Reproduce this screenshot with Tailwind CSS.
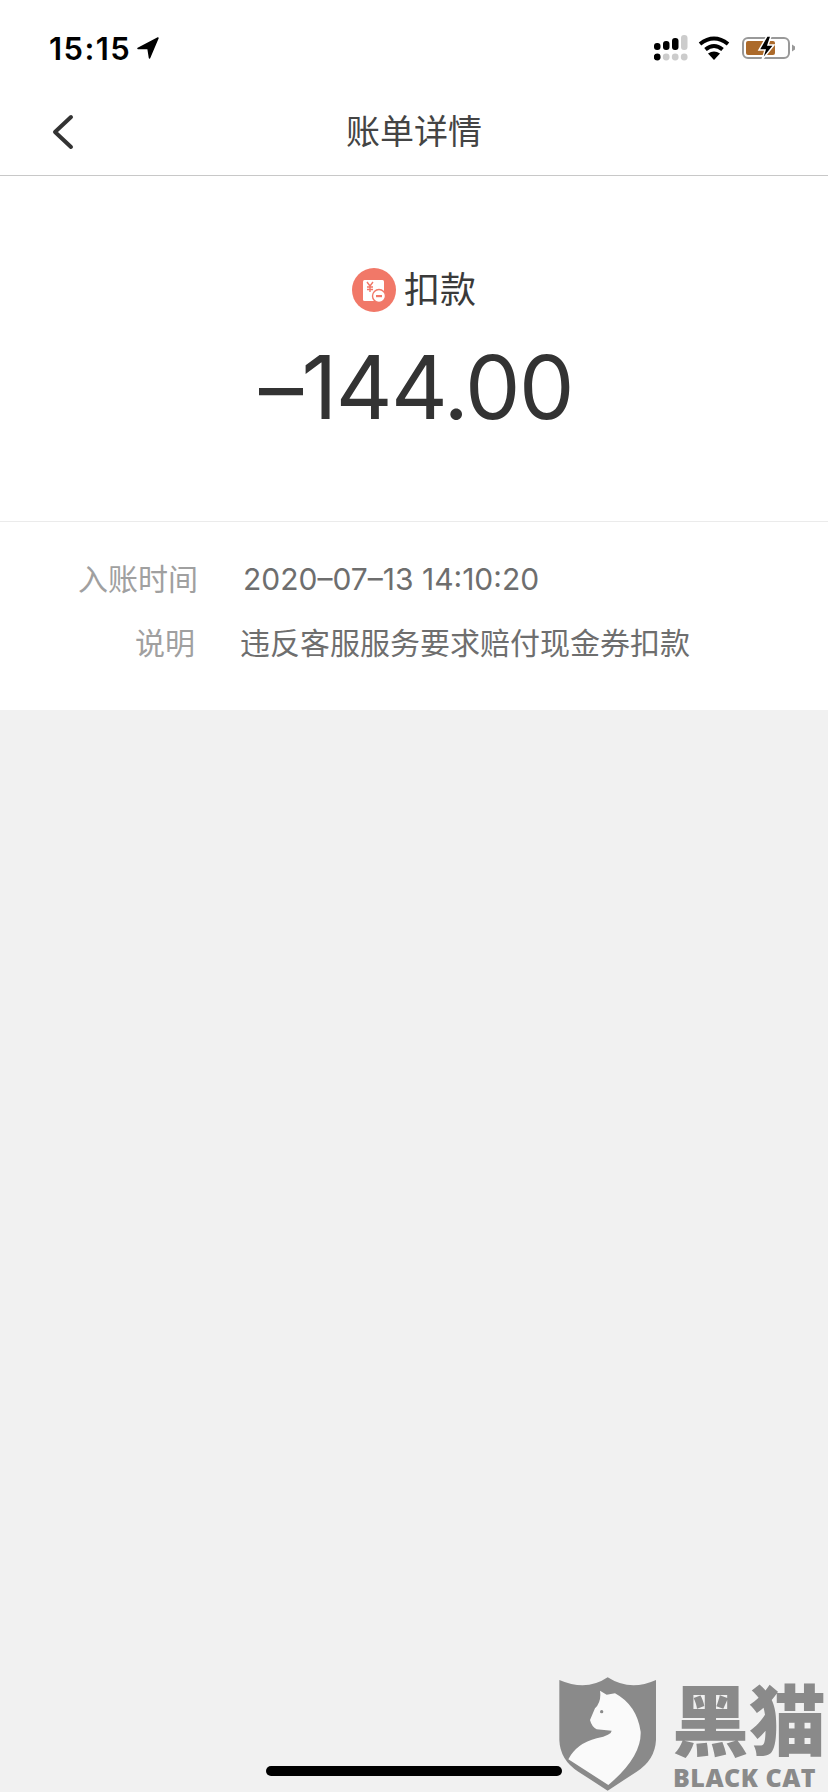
<!DOCTYPE html>
<html lang="zh">
<head>
    <meta charset="UTF-8">
    <meta name="viewport" content="width=device-width, initial-scale=1.0">
    <title>账单详情</title>
    <script src="https://cdn.jsdelivr.net/npm/@tailwindcss/browser@4"></script>
</head>
<body class="relative flex h-[1792px] w-[828px] flex-col overflow-hidden bg-[#f1f1f1] font-['Inter','Noto_Sans_CJK_SC',sans-serif]">

    <!-- Status bar -->
    <div class="flex h-[88px] items-center justify-between bg-white pl-[49px] pr-[32px] pt-[8px]">
        <div class="flex items-center gap-[6px]">
            <span class="text-[31px] leading-none font-semibold tracking-[1.4px] text-black">15:15</span>
            <svg width="22" height="22" viewBox="0 0 22 22"><path d="M1 11.5 L21 1 L12.5 21 L11 11.5 Z" fill="#000" stroke="#000" stroke-width="1.5" stroke-linejoin="round"/></svg>
        </div>
        <div class="flex items-center gap-[10px]">
            <!-- Dual SIM signal -->
            <svg width="34" height="26" viewBox="0 0 34 26">
                <rect x="0" y="8" width="6.5" height="7" rx="3" fill="#000"/>
                <rect x="9" y="6" width="6.5" height="9" rx="3" fill="#000"/>
                <rect x="18" y="3" width="6.5" height="12" rx="3" fill="#000"/>
                <rect x="27" y="0" width="6.5" height="15" rx="3" fill="#ccc"/>
                <circle cx="3.2" cy="22" r="3.4" fill="#000"/>
                <circle cx="12.2" cy="22" r="3.4" fill="#ccc"/>
                <circle cx="21.2" cy="22" r="3.4" fill="#ccc"/>
                <circle cx="30.2" cy="22" r="3.4" fill="#ccc"/>
            </svg>
            <!-- Wifi -->
            <svg width="32" height="24" viewBox="0 0 32 24" fill="none" stroke="#000" stroke-width="4">
                <path d="M2 8 Q16 -3 30 8"/>
                <path d="M7.5 13.5 Q16 6.5 24.5 13.5"/>
                <path d="M16 24 L10 17.5 Q16 13.5 22 17.5 Z" fill="#000" stroke="none"/>
            </svg>
            <!-- Battery, charging -->
            <svg width="54" height="24" viewBox="0 0 54 24" class="ml-[2px]">
                <rect x="1" y="2" width="46" height="20" rx="5" fill="#fff" stroke="#999" stroke-width="2"/>
                <rect x="4" y="5" width="29" height="14" rx="2" fill="#ac6a2a"/>
                <path d="M25 0 L17 14 H23 L20 24 L32 9 H26 L29 0 Z" fill="#000" stroke="#fff" stroke-width="1.5"/>
                <path d="M50 8.5 L53 10.5 V13.5 L50 15.5 Z" fill="#999"/>
            </svg>
        </div>
    </div>

    <!-- Nav -->
    <div class="relative flex h-[88px] items-center justify-center border-b border-[#c8c8c8] bg-white">
        <svg class="absolute left-[50px] top-[26px]" width="26" height="36" viewBox="0 0 26 36" fill="none" stroke="#333" stroke-width="4" stroke-linecap="round" stroke-linejoin="round">
            <path d="M21 3 L5 18 L21 33"/>
        </svg>
        <h1 class="text-[34px] leading-none font-normal text-[#444]">账单详情</h1>
    </div>

    <!-- Amount -->
    <div class="flex h-[346px] flex-col items-center border-b border-[#ebebeb] bg-white pt-[92px]">
        <div class="flex items-center gap-[8px]">
            <svg width="44" height="44" viewBox="0 0 44 44">
                <circle cx="22" cy="22" r="22" fill="#f17868"/>
                <rect x="11" y="12" width="21" height="21" rx="1.5" fill="#fff"/>
                <path d="M15 14 L18 18 L21 14 M18 18 V24 M15 19 H21 M15 21.5 H21" fill="none" stroke="#f17868" stroke-width="1.4"/>
                <circle cx="27" cy="28" r="6.5" fill="#fff" stroke="#f17868" stroke-width="1.4"/>
                <rect x="24" y="27" width="6" height="2.2" fill="#f17868"/>
            </svg>
            <span class="text-[36px] leading-none text-[#3a3a3a]">扣款</span>
        </div>
        <div class="mt-[31px] ml-[4px] text-[88px] leading-none font-normal tracking-[-1.5px] text-[#333]">–144.00</div>
    </div>

    <!-- Details -->
    <div class="flex h-[188px] flex-col gap-[34px] bg-white pt-[42px]">
        <div class="flex items-center text-[30px] leading-[30px]">
            <span class="w-[198px] text-right text-[#a0a0a0]">入账时间</span>
            <span class="ml-[45px] text-[#6e6e6e]">2020–07–13 14:10:20</span>
        </div>
        <div class="flex items-center text-[30px] leading-[30px]">
            <span class="w-[195px] text-right text-[#a0a0a0]">说明</span>
            <span class="ml-[45px] text-[#6e6e6e]">违反客服服务要求赔付现金券扣款</span>
        </div>
    </div>

    <!-- Home indicator -->
    <div class="absolute left-[266px] top-[1766px] h-[10px] w-[296px] rounded-full bg-black"></div>

    <!-- Watermark -->
    <div class="absolute left-[540px] top-[1660px] h-[132px] w-[288px]">
        <svg class="absolute left-0 top-0" width="288" height="132" viewBox="0 0 864 396">
            <path d="M58 60 Q140 95 203 52 Q270 95 348 60 V240 Q345 300 290 335 L203 392 L115 335 Q60 300 58 240 Z" fill="#8a8a8a"/>
            <path d="M180 92 L200 104 L225 100 Q290 135 302 215 Q305 290 205 375 L85 298 Q110 250 170 235 Q215 225 215 212 L170 208 Q155 200 150 180 L165 145 Q185 125 180 92 Z" fill="#fafafa"/>
            <circle cx="185" cy="155" r="5" fill="#8a8a8a"/>
        </svg>
        <div class="absolute left-[132px] top-[24px] whitespace-nowrap text-[77px] leading-[76px] font-black text-[#8a8a8a]">黑猫</div>
        <div class="absolute left-[133px] top-[104px] whitespace-nowrap font-['Open_Sans',sans-serif] text-[25px] leading-[26px] font-extrabold tracking-[0.5px] text-[#8a8a8a]">BLACK CAT</div>
    </div>
</body>
</html>
